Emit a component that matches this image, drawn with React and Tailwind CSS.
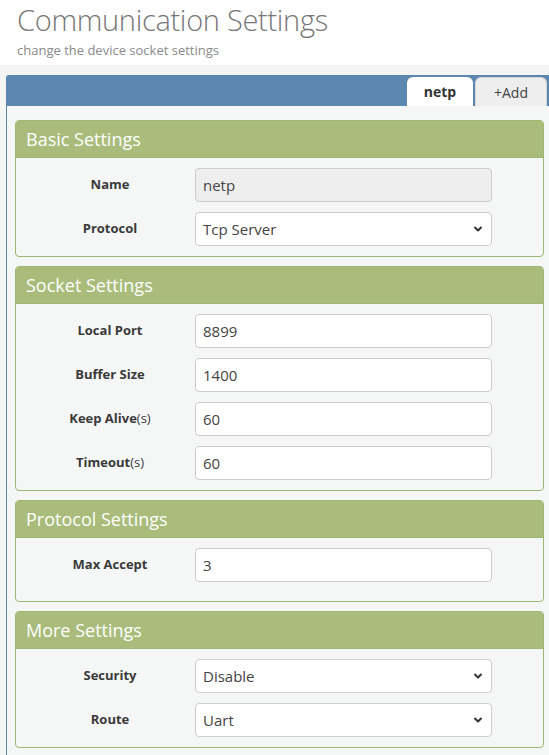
import React from "react";

const font = { fontFamily: '"Open Sans", "Segoe UI", "Liberation Sans", sans-serif' };

function Chevron() {
  return (
    <svg width="10" height="8" viewBox="0 0 10 8" className="absolute right-[8px] top-1/2 -translate-y-1/2">
      <path d="M2 2.5 L5 5.5 L8 2.5" fill="none" stroke="#333" strokeWidth="2" strokeLinecap="round" strokeLinejoin="round" />
    </svg>
  );
}

function Row({ label, unit, value, select, disabled }) {
  return (
    <div className="flex items-center h-[34px]">
      <div className="w-[170px] text-center text-[13px] font-bold text-[#3a3a3a]">
        {label}
        {unit && <span className="font-normal">{unit}</span>}
      </div>
      <div
        className={`relative w-[297px] h-[34px] rounded-[4px] border border-[#cccccc] flex items-center pl-[7px] text-[15px] text-[#444] ${
          disabled ? "bg-[#eeeeee]" : "bg-white"
        }`}
      >
        {value}
        {select && <Chevron />}
      </div>
    </div>
  );
}

function Section({ title, children, extraBottom }) {
  return (
    <div className="rounded-[4px] border border-[#9fb871] bg-[#f5f6f6] overflow-hidden">
      <div className="h-[37px] bg-[#a9bc7b] border-b border-[#9fb871] flex items-center pl-[10px] text-white text-[18px]">
        {title}
      </div>
      <div className={`pl-[9px] pt-[10px] flex flex-col gap-[10px] ${extraBottom ? "pb-[19px]" : "pb-[10px]"}`}>
        {children}
      </div>
    </div>
  );
}

export default function App() {
  return (
    <div style={font} className="w-[549px] overflow-hidden bg-[#f4f5f5] min-h-[755px]">
      <div className="bg-white h-[66px] pl-[17px] border-b border-[#eeeeee]">
        <div className="text-[29px] font-light text-[#777] leading-[40px] tracking-[-0.3px] whitespace-nowrap">Communication Settings</div>
        <div className="text-[13px] text-[#8a8a8a] leading-[18px] mt-[1px]">change the device socket settings</div>
      </div>
      <div className="ml-[6px] mt-[9px] w-[543px] rounded-tl-[3px] border-l border-t border-[#5b86ae] bg-[#f5f6f6]">
        <div className="h-[30px] bg-[#5c87b0] flex items-end justify-end pr-[2px]">
          <div className="h-[29px] w-[66px] bg-white rounded-t-[6px] flex items-center justify-center text-[14px] font-bold text-[#333]">
            netp
          </div>
          <div className="ml-[2px] h-[29px] w-[72px] bg-[#eeeeee] border border-b-0 border-[#d5d5d5] rounded-t-[6px] flex items-center justify-center text-[14px] text-[#444]">
            +Add
          </div>
        </div>
        <div className="pl-[8px] pr-[5px] pt-[14px] pb-[10px] flex flex-col gap-[9px]">
          <Section title="Basic Settings">
            <Row label="Name" value="netp" disabled />
            <Row label="Protocol" value="Tcp Server" select />
          </Section>
          <Section title="Socket Settings">
            <Row label="Local Port" value="8899" />
            <Row label="Buffer Size" value="1400" />
            <Row label="Keep Alive" unit="(s)" value="60" />
            <Row label="Timeout" unit="(s)" value="60" />
          </Section>
          <Section title="Protocol Settings" extraBottom>
            <Row label="Max Accept" value="3" />
          </Section>
          <Section title="More Settings">
            <Row label="Security" value="Disable" select />
            <Row label="Route" value="Uart" select />
          </Section>
        </div>
      </div>
    </div>
  );
}
